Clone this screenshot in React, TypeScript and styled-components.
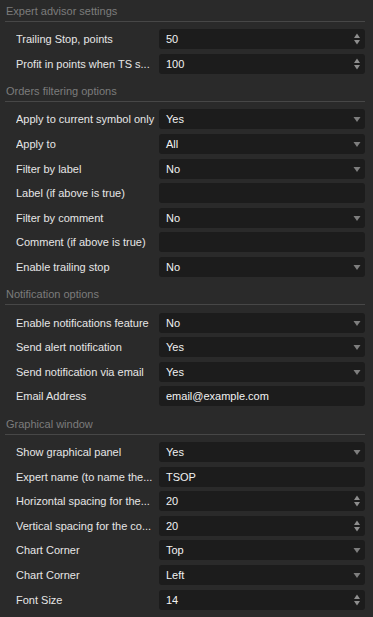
import React from "react";
import styled, { createGlobalStyle } from "styled-components";

const Global = createGlobalStyle`
  html, body { margin: 0; padding: 0; background: #2a2a2a; }
  body { font-family: "Liberation Sans", Arial, sans-serif; font-size: 11px; }
`;

const Page = styled.div`
  width: 373px;
  height: 617px;
  background: #2a2a2a;
  padding-top: 1px;
  box-sizing: border-box;
  overflow: hidden;
`;

const Section = styled.section`
  display: flex;
  flex-direction: column;
  padding-bottom: 5px;
`;

const SectionHeader = styled.div`
  margin: 0 8px 0 5px;
  padding-left: 1px;
  height: 20px;
  line-height: 20px;
  color: #7c7c7c;
  border-bottom: 1px solid #474747;
`;

const Rows = styled.div`
  display: flex;
  flex-direction: column;
  padding-top: 5px;
`;

const Row = styled.div`
  display: flex;
  align-items: center;
  height: 24.6px;
  padding-left: 16px;
`;

const Label = styled.div`
  width: 142px;
  margin-right: 1px;
  color: #e6e6e6;
  white-space: nowrap;
  overflow: hidden;
`;

const Field = styled.div`
  position: relative;
  width: 206px;
  height: 20px;
  line-height: 20px;
  background: #1c1c1c;
  border-radius: 3px;
  color: #f2f2f2;
  padding-left: 7px;
  box-sizing: border-box;
`;

const Arrows = styled.svg`
  position: absolute;
  right: 4px;
  top: 0;
`;

type Kind = "spin" | "select" | "text";

const Control: React.FC<{ kind: Kind; value: string }> = ({ kind, value }) => (
  <Field>
    {value}
    {kind === "spin" && (
      <Arrows width="8" height="20" viewBox="0 0 8 20">
        <polygon points="4,4.5 7,9 1,9" fill="#8e8e8e" />
        <polygon points="1,11 7,11 4,15.5" fill="#8e8e8e" />
      </Arrows>
    )}
    {kind === "select" && (
      <Arrows width="8" height="20" viewBox="0 0 8 20">
        <polygon points="0.5,8 7.5,8 4,13" fill="#7e7e7e" />
      </Arrows>
    )}
  </Field>
);

type Item = { label: string; kind: Kind; value: string };
const sections: { title: string; items: Item[] }[] = [
  {
    title: "Expert advisor settings",
    items: [
      { label: "Trailing Stop, points", kind: "spin", value: "50" },
      { label: "Profit in points when TS s...", kind: "spin", value: "100" },
    ],
  },
  {
    title: "Orders filtering options",
    items: [
      { label: "Apply to current symbol only", kind: "select", value: "Yes" },
      { label: "Apply to", kind: "select", value: "All" },
      { label: "Filter by label", kind: "select", value: "No" },
      { label: "Label (if above is true)", kind: "text", value: "" },
      { label: "Filter by comment", kind: "select", value: "No" },
      { label: "Comment (if above is true)", kind: "text", value: "" },
      { label: "Enable trailing stop", kind: "select", value: "No" },
    ],
  },
  {
    title: "Notification options",
    items: [
      { label: "Enable notifications feature", kind: "select", value: "No" },
      { label: "Send alert notification", kind: "select", value: "Yes" },
      { label: "Send notification via email", kind: "select", value: "Yes" },
      { label: "Email Address", kind: "text", value: "email@example.com" },
    ],
  },
  {
    title: "Graphical window",
    items: [
      { label: "Show graphical panel", kind: "select", value: "Yes" },
      { label: "Expert name (to name the...", kind: "text", value: "TSOP" },
      { label: "Horizontal spacing for the...", kind: "spin", value: "20" },
      { label: "Vertical spacing for the co...", kind: "spin", value: "20" },
      { label: "Chart Corner", kind: "select", value: "Top" },
      { label: "Chart Corner", kind: "select", value: "Left" },
      { label: "Font Size", kind: "spin", value: "14" },
    ],
  },
];

export default function App() {
  return (
    <>
      <Global />
      <Page>
        {sections.map((s) => (
          <Section key={s.title}>
            <SectionHeader>{s.title}</SectionHeader>
            <Rows>
              {s.items.map((it, i) => (
                <Row key={i}>
                  <Label>{it.label}</Label>
                  <Control kind={it.kind} value={it.value} />
                </Row>
              ))}
            </Rows>
          </Section>
        ))}
      </Page>
    </>
  );
}
